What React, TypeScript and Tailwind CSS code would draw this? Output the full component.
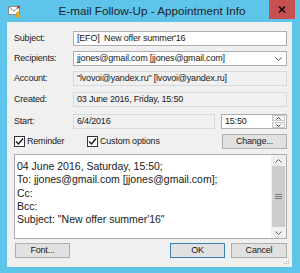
import React from "react";

const font = "font-['Segoe_UI','Liberation_Sans',Arial,sans-serif]";

function Label({ children }: { children: React.ReactNode }) {
  return <div className="w-[59px] shrink-0 text-[9px] tracking-[-0.2px] text-[#1a1a1a] leading-none">{children}</div>;
}

function Box({ children, gray = false, className = "" }: { children?: React.ReactNode; gray?: boolean; className?: string }) {
  return (
    <div
      className={`h-[15px] flex items-center px-[3px] text-[9px] tracking-[-0.2px] leading-none text-[#1a1a1a] whitespace-nowrap overflow-hidden border ${
        gray ? "bg-[#f0f0f0] border-[#d9d9d9]" : "bg-white border-[#abadb3]"
      } ${className}`}
    >
      {children}
    </div>
  );
}

function Check({ label }: { label: string }) {
  return (
    <div className="flex items-center gap-[2px]">
      <div className="w-[11px] h-[11px] bg-white border border-[#333] flex items-center justify-center">
        <svg width="9" height="9" viewBox="0 0 9 9">
          <path d="M1 4.5 L3.5 7 L8 1.5" stroke="#1a1a1a" strokeWidth="1.4" fill="none" />
        </svg>
      </div>
      <span className="text-[9px] tracking-[-0.2px] leading-none text-[#1a1a1a]">{label}</span>
    </div>
  );
}

function Btn({ children, def = false, className = "" }: { children: React.ReactNode; def?: boolean; className?: string }) {
  return (
    <div
      className={`h-[15px] flex items-center justify-center text-[9px] tracking-[-0.2px] leading-none text-[#1a1a1a] bg-[#e1e1e1] border ${
        def ? "border-[#3c7fb1]" : "border-[#adadad]"
      } ${className}`}
    >
      {children}
    </div>
  );
}

export default function App() {
  return (
    <div className={`w-[300px] h-[273px] bg-[#5ec4e9] flex flex-col ${font}`}>
      {/* title bar */}
      <div className="h-[22px] relative flex items-center justify-center shrink-0">
        <svg className="absolute left-[8px] top-[5px]" width="14" height="13" viewBox="0 0 14 13">
          <rect x="0.5" y="1.5" width="11" height="8" fill="#fff" stroke="#8a8a8a" />
          <path d="M0.5 1.5 L6 6 L11.5 1.5" stroke="#8a8a8a" fill="none" />
          <circle cx="10.5" cy="2" r="1.6" fill="#d9342b" />
          <path d="M7.5 12 L8.5 10 L8.5 7.5 Q10 5.5 11.5 7.5 L11.5 10 L12.5 12 Z" fill="#f2b21b" stroke="#c98a06" strokeWidth="0.5" />
        </svg>
        <span className="text-[11.7px] text-[#1f1f1f] leading-none pl-[4px]">E-mail Follow-Up - Appointment Info</span>
        <div className="absolute right-[5px] top-0 w-[26px] h-[19px] bg-[#c75050] flex items-center justify-center">
          <svg width="8" height="7" viewBox="0 0 8 7">
            <path d="M1 0.5 L7 6.5 M7 0.5 L1 6.5" stroke="#111" strokeWidth="1.6" />
          </svg>
        </div>
      </div>

      {/* client */}
      <div className="ml-[7px] mr-[8px] h-[245px] bg-[#f0f0f0] pl-[7px] pr-[5px] pt-[9px] flex flex-col relative">
        <div className="flex items-center h-[15px]">
          <Label>Subject:</Label>
          <Box className="flex-1">[EFO]&nbsp; New offer summer'16</Box>
        </div>
        <div className="flex items-center h-[15px] mt-[5px]">
          <Label>Recipients:</Label>
          <Box className="flex-1 justify-between pr-[4px]">
            <span>jjones@gmail.com [jjones@gmail.com]</span>
            <svg width="7" height="4" viewBox="0 0 7 4">
              <path d="M0.5 0.5 L3.5 3.5 L6.5 0.5" stroke="#555" fill="none" />
            </svg>
          </Box>
        </div>
        <div className="flex items-center h-[15px] mt-[5px]">
          <Label>Account:</Label>
          <Box gray className="flex-1">"lvovoi@yandex.ru" [lvovoi@yandex.ru]</Box>
        </div>
        <div className="flex items-center h-[15px] mt-[6px]">
          <Label>Created:</Label>
          <Box gray className="flex-1">03 June 2016, Friday, 15:50</Box>
        </div>
        <div className="flex items-center h-[15px] mt-[7px]">
          <Label>Start:</Label>
          <Box gray className="w-[142px]">6/4/2016</Box>
          <Box className="ml-[6px] flex-1 justify-between pr-[1px]">
            <span>15:50</span>
            <div className="flex flex-col gap-[1px]">
              <div className="w-[13px] h-[6px] border border-[#c8c8c8] bg-[#f3f3f3] flex items-center justify-center">
                <svg width="5" height="3" viewBox="0 0 5 3"><path d="M0.5 2.5 L2.5 0.5 L4.5 2.5" stroke="#444" fill="none" /></svg>
              </div>
              <div className="w-[13px] h-[6px] border border-[#c8c8c8] bg-[#f3f3f3] flex items-center justify-center">
                <svg width="5" height="3" viewBox="0 0 5 3"><path d="M0.5 0.5 L2.5 2.5 L4.5 0.5" stroke="#444" fill="none" /></svg>
              </div>
            </div>
          </Box>
        </div>
        <div className="flex items-center h-[15px] mt-[5px]">
          <div className="w-[73px] shrink-0">
            <Check label="Reminder" />
          </div>
          <Check label="Custom options" />
          <Btn className="ml-auto w-[65px]">Change...</Btn>
        </div>

        {/* body */}
        <div className="mt-[5px] h-[85px] bg-white border border-[#abadb3] flex">
          <div className="flex-1 pl-[2px] pt-[5px] text-[10.5px] leading-[13.3px] text-[#1a1a1a] whitespace-nowrap overflow-hidden">
            <div>04 June 2016, Saturday, 15:50;</div>
            <div>To: jjones@gmail.com [jjones@gmail.com];</div>
            <div>Cc:</div>
            <div>Bcc:</div>
            <div>Subject: "New offer summer'16"</div>
          </div>
          <div className="w-[15px] bg-[#f0f0f0] flex flex-col items-center">
            <div className="h-[11px] flex items-center justify-center">
              <svg width="7" height="4" viewBox="0 0 7 4"><path d="M0.5 3.5 L3.5 0.5 L6.5 3.5" stroke="#606060" fill="none" /></svg>
            </div>
            <div className="flex-1 w-[13px] bg-[#cdcdcd] flex items-center justify-center">
              <svg width="7" height="6" viewBox="0 0 7 6"><path d="M0 0.5 H7 M0 2.5 H7 M0 4.5 H7" stroke="#7a7a7a" /></svg>
            </div>
            <div className="h-[11px] flex items-center justify-center">
              <svg width="7" height="4" viewBox="0 0 7 4"><path d="M0.5 0.5 L3.5 3.5 L6.5 0.5" stroke="#606060" fill="none" /></svg>
            </div>
          </div>
        </div>

        {/* buttons */}
        <div className="flex items-center mt-[4px]">
          <Btn className="w-[55px] ml-[1px]">Font...</Btn>
          <Btn def className="ml-auto w-[55px]">OK</Btn>
          <Btn className="ml-[6px] w-[56px]">Cancel</Btn>
        </div>

        <svg className="absolute right-[2px] bottom-[2px]" width="6" height="6" viewBox="0 0 6 6">
          <rect x="4" y="0" width="1" height="1" fill="#b5b5b5" />
          <rect x="2" y="2" width="1" height="1" fill="#b5b5b5" />
          <rect x="4" y="2" width="1" height="1" fill="#b5b5b5" />
          <rect x="0" y="4" width="1" height="1" fill="#b5b5b5" />
          <rect x="2" y="4" width="1" height="1" fill="#b5b5b5" />
          <rect x="4" y="4" width="1" height="1" fill="#b5b5b5" />
        </svg>
      </div>
    </div>
  );
}
